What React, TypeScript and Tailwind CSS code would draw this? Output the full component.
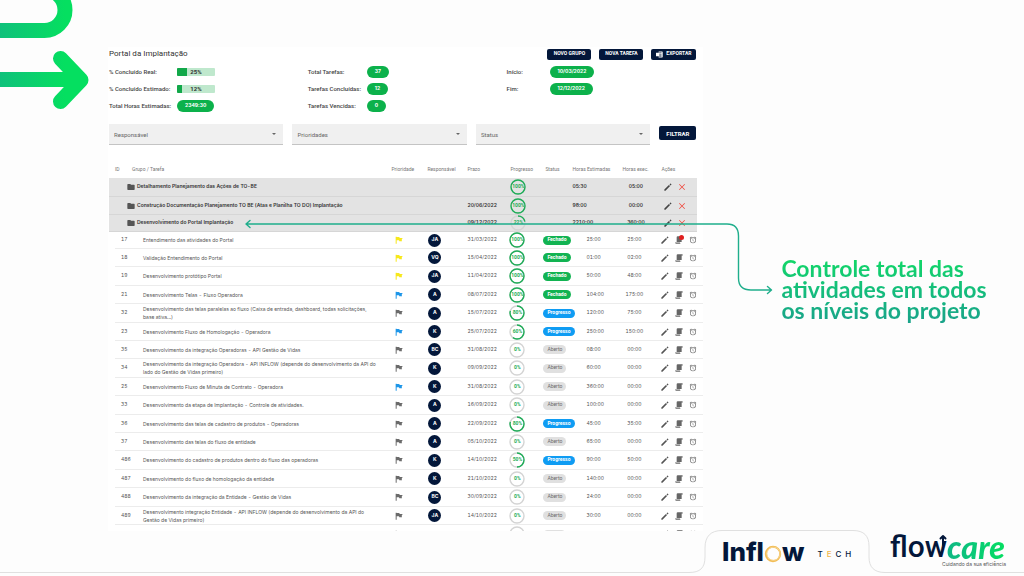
import React from "react";

type Flag = "yellow" | "blue" | "grey";
type Status = "Fechado" | "Progresso" | "Aberto";
type Group = { name: string; due: string; pct: number; est: string; exec: string };
type Task = {
  id: string; name: string; flag: Flag; who: string; due: string;
  pct: number; status: Status; est: string; exec: string; alert?: boolean;
};

const groups: Group[] = [
  { name: "Detalhamento Planejamento das Ações de TO-BE", due: "", pct: 100, est: "05:30", exec: "05:00" },
  { name: "Construção Documentação Planejamento TO BE (Atas e Planilha TO DO) Implantação", due: "20/06/2022", pct: 100, est: "98:00", exec: "00:00" },
  { name: "Desenvolvimento do Portal Implantação", due: "09/12/2022", pct: 22, est: "2210:00", exec: "360:00" },
];

const tasks: Task[] = [
  { id: "17", name: "Entendimento das atividades do Portal", flag: "yellow", who: "JA", due: "31/03/2022", pct: 100, status: "Fechado", est: "25:00", exec: "25:00", alert: true },
  { id: "18", name: "Validação Entendimento do Portal", flag: "yellow", who: "VQ", due: "15/04/2022", pct: 100, status: "Fechado", est: "01:00", exec: "02:00" },
  { id: "19", name: "Desenvolvimento protótipo Portal", flag: "yellow", who: "JA", due: "11/04/2022", pct: 100, status: "Fechado", est: "50:00", exec: "48:00" },
  { id: "21", name: "Desenvolvimento Telas - Fluxo Operadora", flag: "blue", who: "A", due: "08/07/2022", pct: 100, status: "Fechado", est: "104:00", exec: "175:00" },
  { id: "32", name: "Desenvolvimento das telas paralelas ao fluxo (Caixa de entrada, dashboard, todas solicitações, base ativa...)", flag: "grey", who: "A", due: "15/07/2022", pct: 80, status: "Progresso", est: "120:00", exec: "75:00" },
  { id: "23", name: "Desenvolvimento Fluxo de Homologação - Operadora", flag: "blue", who: "K", due: "25/07/2022", pct: 60, status: "Progresso", est: "250:00", exec: "150:00" },
  { id: "35", name: "Desenvolvimento da integração Operadoras - API Gestão de Vidas", flag: "grey", who: "BC", due: "31/08/2022", pct: 0, status: "Aberto", est: "08:00", exec: "00:00" },
  { id: "34", name: "Desenvolvimento da integração Operadora - API INFLOW (depende do desenvolvimento da API do lado do Gestão de Vidas primeiro)", flag: "grey", who: "K", due: "09/09/2022", pct: 0, status: "Aberto", est: "60:00", exec: "00:00" },
  { id: "25", name: "Desenvolvimento Fluxo de Minuta de Contrato - Operadora", flag: "blue", who: "K", due: "31/08/2022", pct: 0, status: "Aberto", est: "360:00", exec: "00:00" },
  { id: "33", name: "Desenvolvimento da etapa de Implantação - Controle de atividades.", flag: "grey", who: "A", due: "16/09/2022", pct: 0, status: "Aberto", est: "100:00", exec: "00:00" },
  { id: "36", name: "Desenvolvimento das telas de cadastro de produtos - Operadoras", flag: "grey", who: "A", due: "22/09/2022", pct: 80, status: "Progresso", est: "45:00", exec: "35:00" },
  { id: "37", name: "Desenvolvimento das telas do fluxo de entidade", flag: "grey", who: "A", due: "05/10/2022", pct: 0, status: "Aberto", est: "65:00", exec: "00:00" },
  { id: "486", name: "Desenvolvimento do cadastro de produtos dentro do fluxo das operadoras", flag: "grey", who: "K", due: "14/10/2022", pct: 50, status: "Progresso", est: "90:00", exec: "50:00" },
  { id: "487", name: "Desenvolvimento do fluxo de homologação da entidade", flag: "grey", who: "K", due: "21/10/2022", pct: 0, status: "Aberto", est: "140:00", exec: "00:00" },
  { id: "488", name: "Desenvolvimento da integração da Entidade - Gestão de Vidas", flag: "grey", who: "BC", due: "30/09/2022", pct: 0, status: "Aberto", est: "24:00", exec: "00:00" },
  { id: "489", name: "Desenvolvimento integração Entidade - API INFLOW (depende do desenvolvimento da API do Gestão de Vidas primeiro)", flag: "grey", who: "JA", due: "14/10/2022", pct: 0, status: "Aberto", est: "30:00", exec: "00:00" },
];

const flagColor: Record<Flag, string> = {
  yellow: "text-[#f7e81c]",
  blue: "text-[#1e96e8]",
  grey: "text-[#6b6b6b]",
};
const statusColor: Record<Status, string> = {
  Fechado: "bg-[#12b352] text-white font-bold",
  Progresso: "bg-[#0f9cf3] text-white font-bold",
  Aberto: "bg-[#e0e0e0] text-[#6a6a6a]",
};

function Glyph({ d, className }: { d: string; className: string }) {
  return (
    <svg viewBox="0 0 24 24" fill="currentColor" className={className} aria-hidden="true">
      <path d={d} />
    </svg>
  );
}
const PENCIL = "M22 5.200c.5-.5.5-1.200 0-1.700L20.500 2c-.5-.5-1.200-.5-1.700 0L16.500 4.300l3.200 3.200M1 19.500V23h3.500L18.200 9.200 14.800 5.800 1 19.500z";
const CLOSE = "M21 4.500L19.500 3 12 10.500 4.500 3 3 4.500 10.500 12 3 19.500 4.500 21 12 13.500 19.500 21 21 19.500 13.500 12z";
const FOLDER = "M10 3H3c-1.100 0-2 .9-2 2v14a2 2 0 0 0 2 2h18a2 2 0 0 0 2-2V7c0-1.100-.9-2-2-2h-9l-2-2z";
const FLAG = "M2 2h3v1h8l1 3h9l-3 5 1 5h-8l-1-3H5v10H2z";
const SCROLL = "M8 1h13c1.500 0 2.500 1 2.500 3.500H20V18H5V4c0-2 1-3 3-3zM0 19.500h15c0 1.500.8 2.500 2 3.500H3.500C1.500 23 0 21.500 0 19.500z";
const ALARM = "M12 20a7 7 0 1 1 0-14 7 7 0 0 1 0 14m0-16a9 9 0 1 0 0 18 9 9 0 0 0 0-18m.5 4H11v6l4.750 2.850.75-1.230-4-2.370V8M7.880 3.390L6.600 1.860 2 5.710l1.290 1.530 4.590-3.850M22 5.720l-4.600-3.860-1.290 1.530 4.600 3.860L22 5.720z";
const EXPORT = "M9 2h12a2 2 0 0 1 2 2v16a2 2 0 0 1-2 2H9v-3h10v-2H9v-2h10v-2H9v-2h10V9H9V7h10V5H9V2zM0 6h11v12H0z";

function Ring({ pct, label = true }: { pct: number; label?: boolean }) {
  return (
    <div className="relative flex size-4 items-center justify-center">
      <svg viewBox="0 0 16 16" className="absolute size-4 -rotate-90" fill="none" strokeWidth="1.4" aria-hidden="true">
        <circle cx="8" cy="8" r="7" stroke="#d4d4d4" />
        {pct > 0 && <circle cx="8" cy="8" r="7" stroke="#1fad58" pathLength="100" strokeDasharray={`${pct} 100`} />}
      </svg>
      {label && <span className="font-['Roboto',sans-serif] text-[5px] font-bold text-[#1fad58]">{pct}%</span>}
    </div>
  );
}

function Pill({ children }: { children: React.ReactNode }) {
  return (
    <span className="flex h-3 items-center justify-self-start rounded-full bg-[#0cb14b] px-2 font-['Inter',sans-serif] text-[5px] font-bold text-white">
      {children}
    </span>
  );
}

function Bar({ pct }: { pct: number }) {
  return (
    <div className="relative flex h-2 w-[38px] items-center justify-center overflow-hidden rounded-[1px] bg-[#bfe8cd]">
      <div className="absolute inset-y-0 left-0 bg-[#12a84a]" style={{ width: `${pct}%` }} />
      <span className="relative text-[6px] font-bold text-[#333]">{pct}%</span>
    </div>
  );
}

function Filter({ label }: { label: string }) {
  return (
    <div className="relative flex-1">
      <select aria-label={label} className="block h-[21px] w-full appearance-none border-b border-[#c4c4c4] bg-[#f0f0f0] px-[5px] text-[6px] text-[#666] outline-none">
        <option>{label}</option>
      </select>
      <svg viewBox="0 0 4 2" className="pointer-events-none absolute top-[9px] right-[7px] h-0.5 w-1" aria-hidden="true">
        <path d="M0 0h4L2 2z" fill="#666" />
      </svg>
    </div>
  );
}

const navy = "flex items-center justify-center rounded-[2px] bg-[#03173a] font-bold text-white";
const line = "border-b border-[#ececec] p-0";
const pill = "inline-flex h-[9px] items-center rounded-full px-1 font-['Roboto',sans-serif] text-[5px]";

function TaskRow({ t }: { t: Task }) {
  return (
    <tr className="h-[18px] first:h-[17px] nth-[5n]:h-[19px] nth-[5n+3]:h-[19px]">
      <td className="p-0" />
      <td className={`${line} pl-1.5`}>{t.id}</td>
      <td className={`${line} pr-3 pl-[11px] leading-[8px]`}>{t.name}</td>
      <td className={`${line} pl-1`}><Glyph d={FLAG} className={`size-2 ${flagColor[t.flag]}`} /></td>
      <td className={`${line} pl-px`}>
        <span className="flex size-[13px] items-center justify-center rounded-full bg-[#03173a] text-[5px] font-bold text-white">{t.who}</span>
      </td>
      <td className={line}>{t.due}</td>
      <td className={`${line} pl-px`}><Ring pct={t.pct} /></td>
      <td className={line}>
        <span className={`${pill} ${statusColor[t.status]}`}>{t.status}</span>
      </td>
      <td className={`${line} pl-3.5`}>{t.est}</td>
      <td className={`${line} pr-[11px] text-center`}>{t.exec}</td>
      <td className={line}>
        <div className="flex gap-1.5">
          <button aria-label="Editar"><Glyph d={PENCIL} className="size-2 text-[#555]" /></button>
          <button aria-label="Histórico" className="relative">
            <Glyph d={SCROLL} className="size-2 text-[#666]" />
            {t.alert && <span className="absolute -top-px -right-px size-[5px] rounded-full bg-[#e02020]" />}
          </button>
          <button aria-label="Horas"><Glyph d={ALARM} className="size-2 text-[#777]" /></button>
        </div>
      </td>
      <td className={line} />
    </tr>
  );
}

function PendingRow() {
  return (
    <tr className="h-[18px]" aria-hidden="true">
      <td className="p-0" colSpan={3} />
      <td className="p-0 pl-1"><Glyph d={FLAG} className="size-2 text-[#6b6b6b]" /></td>
      <td className="p-0" colSpan={2} />
      <td className="p-0 pl-px"><Ring pct={0} label={false} /></td>
      <td className="p-0"><span className="block h-[9px] w-[23px] rounded-full bg-[#e0e0e0]" /></td>
      <td className="p-0" colSpan={2} />
      <td className="p-0">
        <div className="flex gap-1.5">
          <Glyph d={PENCIL} className="size-2 text-[#555]" />
          <Glyph d={SCROLL} className="size-2 text-[#666]" />
          <Glyph d={ALARM} className="size-2 text-[#777]" />
        </div>
      </td>
      <td className="p-0" />
    </tr>
  );
}

function GroupRow({ g }: { g: Group }) {
  const cell = "border-b border-[#d6d6d6] bg-[#e3e3e3] p-0";
  return (
    <tr className="h-[18px] font-semibold text-[#333] first:h-[19px] last:h-[17px]">
      <td className={cell} />
      <td colSpan={2} className={`${cell} pl-3`}>
        <div className="flex items-center gap-0.5 whitespace-nowrap">
          <Glyph d={FOLDER} className="size-2 text-[#555]" />
          {g.name}
        </div>
      </td>
      <td className={cell} />
      <td className={cell} />
      <td className={cell}>{g.due}</td>
      <td className={`${cell} pl-0.5`}><Ring pct={g.pct} /></td>
      <td className={cell} />
      <td className={cell}>{g.est}</td>
      <td className={`${cell} pr-2 text-center`}>{g.exec}</td>
      <td className={`${cell} pl-[3px]`}>
        <div className="flex gap-1.5">
          <button aria-label="Editar"><Glyph d={PENCIL} className="size-2 text-[#444]" /></button>
          <button aria-label="Excluir"><Glyph d={CLOSE} className="size-2 text-[#f04438]" /></button>
        </div>
      </td>
      <td className="p-0" />
    </tr>
  );
}

export default function App() {
  return (
    <div className="relative min-h-screen overflow-hidden bg-[#fdfdfd] font-['Roboto',sans-serif] text-[#444]">
      <svg className="absolute top-0 left-0" width="100" height="120" fill="none" strokeWidth="15" strokeLinecap="round" strokeLinejoin="round" aria-hidden="true">
        <defs>
          <linearGradient id="brand" gradientUnits="userSpaceOnUse" x1="0" y1="0" x2="65" y2="0">
            <stop stopColor="#0fc17b" />
            <stop offset="1" stopColor="#05df60" />
          </linearGradient>
        </defs>
        <path d="M-10 30.500H44.500A20.500 20.500 0 0 0 44.500 -10.500" stroke="url(#brand)" />
        <path d="M-10 79.500H80M60.500 58.500L81 80L60.500 101.500" stroke="url(#brand)" />
      </svg>

      <main className="flex pt-[47px] pl-27">
        <section className="max-h-[484px] w-[65%] shrink-0 overflow-hidden bg-white pl-px">
          <header className="flex h-3.5 items-center justify-between pr-[7px]">
            <h1 className="text-[8px] text-[#333]">Portal da Implantação</h1>
            <div className="flex gap-2">
              <button className={`${navy} h-[11px] w-11 text-[5px]`}>NOVO GRUPO</button>
              <button className={`${navy} h-[11px] w-11 text-[5px]`}>NOVA TAREFA</button>
              <button className={`${navy} h-[11px] w-[45px] gap-[3px] text-[5px]`}>
                <Glyph d={EXPORT} className="size-[7px]" />EXPORTAR
              </button>
            </div>
          </header>

          <div className="mt-0.5 grid grid-cols-3 gap-x-0.5 text-[6px] font-medium text-[#444]">
            <div className="grid auto-rows-[17px] grid-cols-[68px_1fr] items-center">
              <span>% Concluído Real:</span><Bar pct={25} />
              <span>% Concluído Estimado:</span><Bar pct={12} />
              <span>Total Horas Estimadas:</span><Pill>2349:30</Pill>
            </div>
            <div className="grid auto-rows-[17px] grid-cols-[59px_1fr] items-center">
              <span>Total Tarefas:</span><Pill>37</Pill>
              <span>Tarefas Concluídas:</span><Pill>12</Pill>
              <span>Tarefas Vencidas:</span><Pill>0</Pill>
            </div>
            <div className="grid auto-rows-[17px] grid-cols-[43px_1fr] items-center">
              <span>Início:</span><Pill>10/03/2022</Pill>
              <span>Fim:</span><Pill>12/12/2022</Pill>
            </div>
          </div>

          <div className="mt-2.5 flex items-start gap-[9px] pr-[7px]">
            <Filter label="Responsável" />
            <Filter label="Prioridades" />
            <Filter label="Status" />
            <button className={`${navy} mt-0.5 h-3.5 w-[37px] text-[6px]`}>FILTRAR</button>
          </div>

          <table className="mt-[17px] w-full table-fixed border-separate border-spacing-0 font-['Inter',sans-serif] text-[5px] text-[#555] tabular-nums">
            <colgroup>
              <col className="w-1.5" /><col className="w-[17px]" /><col />
              <col className="w-9" /><col className="w-10" /><col className="w-[41px]" />
              <col className="w-[35px]" /><col className="w-[29px]" /><col className="w-[46px]" />
              <col className="w-[43px]" /><col className="w-9" /><col className="w-1.5" />
            </colgroup>
            <thead>
              <tr className="h-4 text-left font-['Roboto',sans-serif] text-[#777] [&>th]:p-0 [&>th]:font-normal">
                <th />
                <th>ID</th>
                <th>Grupo / Tarefa</th>
                <th>Prioridade</th>
                <th>Responsável</th>
                <th>Prazo</th>
                <th><span className="pl-0.5">Progresso</span></th>
                <th><span className="pl-0.5">Status</span></th>
                <th className="whitespace-nowrap">Horas Estimadas</th>
                <th><span className="pl-1">Horas exec.</span></th>
                <th>Ações</th>
                <th />
              </tr>
            </thead>
            <tbody>{groups.map((g) => <GroupRow key={g.name} g={g} />)}</tbody>
            <tbody>
              {tasks.map((t) => <TaskRow key={t.id} t={t} />)}
              <PendingRow />
            </tbody>
          </table>
        </section>

        <aside className="pt-[211px] pl-[78px]">
          <h2 className="bg-linear-to-b from-[#12d866] to-[#1a9f8b] bg-clip-text pb-1.5 font-['Lato',sans-serif] text-[23px] leading-[21px] font-bold whitespace-nowrap text-transparent">
            Controle total das<br />atividades em todos<br />os níveis do projeto
          </h2>
        </aside>
      </main>

      <svg className="absolute top-[216px] left-[240px]" width="540" height="84" fill="none" stroke="#1fae8c" strokeWidth="1.4" strokeLinecap="round" strokeLinejoin="round" aria-hidden="true">
        <path d="M6 8H487Q498.500 8 498.500 20V62Q498.500 74 511 74H531M10 4.500L6 8L10 11.500M527.500 70.500L531.500 74L527.500 77.500" />
      </svg>

      <footer className="absolute inset-x-0 bottom-0 flex h-12">
        <div className="mb-[3px] flex-1 border-b border-[#e0e0e0]" />
        <div className="relative h-12 w-[340px] shrink-0">
          <svg className="absolute inset-0" width="340" height="48" aria-hidden="true">
            <path d="M0 44.500H5C16 44.500 21 40 21 29V20C21 8 27 2.500 38 2.500H169C180 2.500 185 8 185 18V29C185 39 190 44.500 201 44.500H345" fill="none" stroke="#e0e0e0" />
          </svg>
          <div className="relative flex h-full items-center justify-between pr-[18px] pl-[38px]">
            <div className="flex items-center gap-[13px]">
              <div className="flex items-center font-['Inter',sans-serif] text-[26px] leading-none font-extrabold text-[#03173a]">
                Infl
                <svg viewBox="0 0 18 18" className="mt-1 size-[18px]" fill="none" aria-hidden="true">
                  <circle cx="9" cy="9" r="7.200" stroke="#f2bd55" strokeWidth="2" />
                  <circle cx="9.500" cy="8.700" r="6.600" stroke="#f7d48d" strokeWidth="1" />
                </svg>
                w
              </div>
              <div className="mt-1 flex gap-1 font-['Inter',sans-serif] text-[8px] leading-none font-medium text-[#03173a]">
                <span>T</span><span className="text-[#f0b84c]">E</span><span>C</span><span>H</span>
              </div>
            </div>
            <div className="flex flex-col items-end pb-[5px]">
              <div className="flex items-end text-[#03173a]">
                <span className="text-[30px] leading-[28px] font-medium">flow</span>
                <svg viewBox="0 0 8 12" className="absolute top-1.5 right-[77px] h-3 w-2" fill="none" stroke="currentColor" strokeWidth="2" strokeLinecap="round" strokeLinejoin="round" aria-hidden="true">
                  <path d="M4 11V2M1.500 4.500L4 2L6.500 4.500" />
                </svg>
                <span className="bg-linear-to-r from-[#0fb784] to-[#05df60] bg-clip-text pr-px font-['Lato',sans-serif] text-[32px] leading-[28px] font-black text-transparent italic">care</span>
              </div>
              <span className="font-['Inter',sans-serif] text-[5px] leading-[6px] text-[#555]">Cuidando da sua eficiência</span>
            </div>
          </div>
        </div>
      </footer>
    </div>
  );
}
